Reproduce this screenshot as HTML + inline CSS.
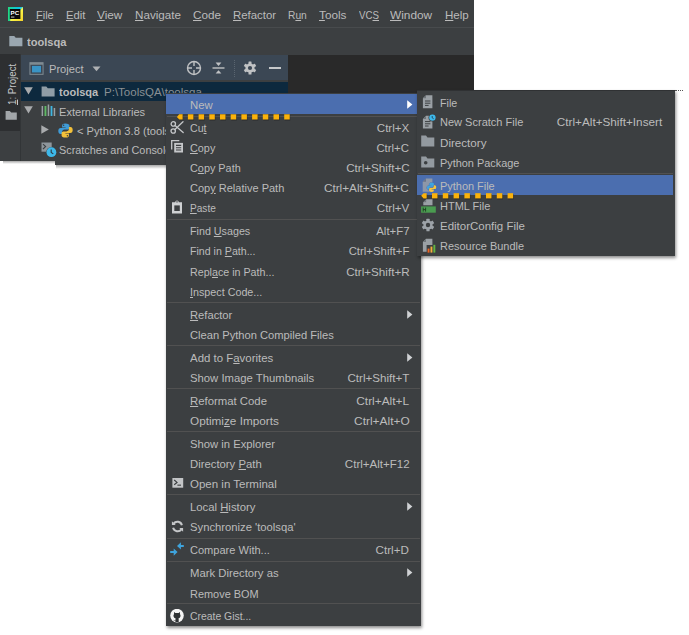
<!DOCTYPE html>
<html><head><meta charset="utf-8"><title>PyCharm - New Python File</title>
<style>
html,body{margin:0;padding:0;background:#fff;}
body{width:689px;height:635px;overflow:hidden;}
#root{position:relative;width:689px;height:635px;overflow:hidden;background:#fff;font-family:"Liberation Sans",sans-serif;font-size:11.5px;color:#bbbbbb;}
#root div, #root svg, #root span{position:absolute;}
.t{white-space:pre;line-height:14px;}
.t u{text-decoration:underline;text-decoration-thickness:1px;text-underline-offset:0.6px;}
.sep{height:1px;background:#515151;}
.hl{background:#4b6eaf;}

</style></head>
<body>
<div id="root">
<!-- IDE window fragment -->
<div style="left:0;top:0;width:473.5px;height:165px;background:#3c3f41;"></div>
<div style="left:0;top:27px;width:473.5px;height:1px;background:#484b4d;"></div>
<div style="left:0;top:54px;width:21px;height:77px;background:#2d2f31;"></div>
<div style="left:20px;top:54px;width:1px;height:111px;background:#323537;"></div>
<div style="left:21px;top:54.5px;width:267px;height:25.7px;background:#3b4754;"></div>
<div style="left:21px;top:82px;width:267px;height:19px;background:#0d293e;"></div>
<div style="left:288px;top:54.5px;width:185.5px;height:111px;background:#292929;"></div>
<div style="left:0;top:161.4px;width:54.5px;height:6px;background:#fff;"></div>
<div style="left:3px;top:161.4px;width:51.5px;height:3px;background:linear-gradient(#8a8a8a,#fff);opacity:.75"></div>
<div style="left:56px;top:165px;width:110px;height:3.5px;background:linear-gradient(#8a8a8a,#fff);opacity:.75"></div>

<span class="t" style="top:8.02px;left:36.40px;transform-origin:0 50%;transform:scaleX(0.9543);"><u>F</u>ile</span>
<span class="t" style="top:8.02px;left:66.00px;transform-origin:0 50%;transform:scaleX(0.9835);"><u>E</u>dit</span>
<span class="t" style="top:8.02px;left:97.30px;transform-origin:0 50%;transform:scaleX(1.0269);"><u>V</u>iew</span>
<span class="t" style="top:8.02px;left:135.00px;transform-origin:0 50%;transform:scaleX(1.0131);"><u>N</u>avigate</span>
<span class="t" style="top:8.02px;left:193.00px;transform-origin:0 50%;transform:scaleX(1.0182);"><u>C</u>ode</span>
<span class="t" style="top:8.02px;left:232.80px;transform-origin:0 50%;transform:scaleX(0.9889);"><u>R</u>efactor</span>
<span class="t" style="top:8.02px;left:288.00px;transform-origin:0 50%;transform:scaleX(0.8899);">R<u>u</u>n</span>
<span class="t" style="top:8.02px;left:318.90px;transform-origin:0 50%;transform:scaleX(1.0239);"><u>T</u>ools</span>
<span class="t" style="top:8.02px;left:358.50px;transform-origin:0 50%;transform:scaleX(0.8454);">VC<u>S</u></span>
<span class="t" style="top:8.02px;left:389.80px;transform-origin:0 50%;transform:scaleX(1.0312);"><u>W</u>indow</span>
<span class="t" style="top:8.02px;left:444.50px;transform-origin:0 50%;transform:scaleX(1.0054);"><u>H</u>elp</span>
<span class="t" style="top:35.02px;left:27.30px;transform-origin:0 50%;transform:scaleX(0.9660);font-weight:bold;">toolsqa</span>
<span class="t" style="top:62.02px;left:48.60px;transform-origin:0 50%;transform:scaleX(0.9666);">Project</span>
<span class="t" style="top:85.02px;left:58.70px;transform-origin:0 50%;transform:scaleX(0.9587);font-weight:bold;">toolsqa</span>
<span class="t" style="top:85.02px;left:103.70px;transform-origin:0 50%;transform:scaleX(1.0009);color:#8a9094;">P:\ToolsQA\toolsqa</span>
<span class="t" style="top:105.02px;left:58.70px;transform-origin:0 50%;transform:scaleX(0.9622);">External Libraries</span>
<span class="t" style="top:124.02px;left:77.40px;transform-origin:0 50%;transform:scaleX(0.9686);">&lt; Python 3.8 (toolsqa)</span>
<span class="t" style="top:143.02px;left:58.70px;transform-origin:0 50%;transform:scaleX(0.9450);">Scratches and Consoles</span>
<!-- PyCharm logo -->
<svg style="left:8px;top:7px" width="15" height="14" viewBox="0 0 15 14">
  <defs><linearGradient id="pcg" x1="0" y1="0" x2="1" y2="1"><stop offset="0" stop-color="#21d789"/><stop offset=".45" stop-color="#07c3f2"/><stop offset=".55" stop-color="#fcf84a"/><stop offset="1" stop-color="#f5d229"/></linearGradient></defs>
  <rect x="0" y="0" width="15" height="14" fill="url(#pcg)"/>
  <rect x="0" y="0" width="2.2" height="14" fill="#21d789"/>
  <rect x="1.8" y="2" width="10.6" height="10" fill="#0a0a0a"/>
  <text x="2.6" y="7.6" font-family="Liberation Sans, sans-serif" font-weight="bold" font-size="6.2" fill="#fff" textLength="8.6" lengthAdjust="spacingAndGlyphs">PC</text>
  <rect x="3" y="9.6" width="3.4" height=".9" fill="#ddd"/>
</svg>
<!-- nav folder -->
<svg style="left:9px;top:35px" width="14" height="12" viewBox="0 0 14 12"><path d="M0.3 1 H5.2 L6.7 2.8 H13.4 V11.2 H0.3 Z" fill="#9aa7b0"/></svg>
<!-- left stripe label -->
<span class="t" style="left:4.5px;top:105.4px;font-size:10.5px;transform-origin:0 0;transform:rotate(-90deg) scaleX(.93);color:#c4c6c8;"><u>1</u>: Project</span>
<svg style="left:5px;top:110px" width="13" height="11" viewBox="0 0 13 11"><path d="M0.6 1 H4.8 L6.2 2.6 H11.8 V9.8 H0.6 Z" fill="#a2a6a9"/></svg>
<!-- project header icon -->
<svg style="left:29.3px;top:62px" width="15" height="13.4" viewBox="0 0 16 14">
  <rect x="1" y="0.6" width="14" height="12.4" fill="none" stroke="#7f8b91" stroke-width="1.1"/>
  <rect x="1" y="0.6" width="14" height="2.2" fill="#7f8b91"/>
  <rect x="3.2" y="4" width="9.6" height="7" fill="#3a94c5"/>
</svg>
<svg style="left:92px;top:66px" width="9" height="6" viewBox="0 0 9 6"><path d="M0.5 0.5 H8.5 L4.5 5.2 Z" fill="#afb1b3"/></svg>
<!-- crosshair -->
<svg style="left:186px;top:60px" width="16" height="16" viewBox="0 0 16 16" fill="none" stroke="#c0c2c4" stroke-width="1.4">
  <circle cx="8" cy="8" r="6.5"/><path d="M8 1.5V6 M8 10V14.5 M1.5 8H6 M10 8H14.5"/>
</svg>
<!-- collapse -->
<svg style="left:212px;top:61px" width="13" height="14" viewBox="0 0 13 14"><rect x="0.5" y="6.3" width="12" height="1.4" fill="#c0c2c4"/><path d="M3.6 1.6H9.4L6.5 4.9Z M3.6 12.6H9.4L6.5 9.2Z" fill="#c0c2c4"/></svg>
<div style="left:234px;top:60px;width:0;height:17px;border-left:1px dotted #5a6570;"></div>
<!-- gear -->
<svg style="left:243px;top:61px" width="14" height="14" viewBox="-7 -7 14 14"><g fill="#c0c2c4">
  <rect x="-1.5" y="-6.4" width="3" height="12.8" rx=".5"/>
  <rect x="-1.5" y="-6.4" width="3" height="12.8" rx=".5" transform="rotate(60)"/><rect x="-1.5" y="-6.4" width="3" height="12.8" rx=".5" transform="rotate(120)"/>
  <circle r="4.6"/></g><circle r="2.1" fill="#3b4754"/></svg>
<div style="left:269px;top:67px;width:12px;height:2px;background:#c6c8ca;"></div>
<!-- tree arrows -->
<svg style="left:24px;top:87px" width="9" height="8" viewBox="0 0 9 8"><path d="M0.2 0.3H8.8L4.5 7.6Z" fill="#a9abad"/></svg>
<svg style="left:24px;top:106px" width="9" height="8" viewBox="0 0 9 8"><path d="M0.2 0.3H8.8L4.5 7.6Z" fill="#a9abad"/></svg>
<svg style="left:41px;top:125px" width="8" height="9" viewBox="0 0 8 9"><path d="M0.3 0.2V8.8L7.8 4.5Z" fill="#a9abad"/></svg>
<!-- tree folder -->
<svg style="left:41px;top:86px" width="14" height="11" viewBox="0 0 14 11"><path d="M0.6 0.4 H5.3 L6.8 2.2 H13.6 V10.4 H0.6 Z" fill="#909da6"/></svg>
<!-- libraries -->
<svg style="left:41px;top:104px" width="15" height="12" viewBox="0 0 15 12">
  <rect x="0.6" y="2" width="1.5" height="10" fill="#9aa0a4"/><rect x="3.5" y="2" width="1.9" height="10" fill="#5fb865"/>
  <rect x="6.7" y="0.5" width="1.5" height="11.5" fill="#9aa0a4"/><rect x="9.6" y="2" width="1.8" height="10" fill="#40b6e0"/>
  <rect x="12.7" y="4" width="1.5" height="8" fill="#9aa0a4"/></svg>
<!-- python -->
<svg style="left:58px;top:123px" width="15" height="15" viewBox="0 0 15 15">
  <path d="M7.3 0.4c-2.6 0-3.2 1-3.2 2.2V4.4H7.6V5H2.6C1.2 5 0.3 6 0.3 7.9s0.9 3 2.2 3H4.1V8.9c0-1.3 1.1-2.3 2.4-2.3H9.6c1 0 1.8-.8 1.8-1.8V2.6c0-1.2-1.1-2.2-4.1-2.2z" fill="#3f9bd6"/>
  <path d="M7.7 14.6c2.6 0 3.2-1 3.2-2.2V10.6H7.4V10H12.4c1.4 0 2.3-1 2.3-2.9s-.9-3-2.2-3H10.9V6.1c0 1.3-1.1 2.3-2.4 2.3H5.4c-1 0-1.8.8-1.8 1.8v2.2c0 1.2 1.1 2.2 4.1 2.2z" fill="#f3c13a"/>
  <circle cx="5.6" cy="2.3" r=".75" fill="#3c3f41"/><circle cx="9.4" cy="12.7" r=".75" fill="#3c3f41"/></svg>
<!-- scratches -->
<svg style="left:41px;top:142px" width="16" height="16" viewBox="0 0 16 16">
  <rect x="0.5" y="0.5" width="10.2" height="9.2" fill="#8e969c"/>
  <path d="M2 2.2L4.6 4.6L2 7" fill="none" stroke="#3c3f41" stroke-width="1.1"/>
  <circle cx="10.4" cy="10.2" r="5.2" fill="#3c3f41"/><circle cx="10.4" cy="10.2" r="4.9" fill="#3db8ea"/>
  <path d="M10.2 7.4V10.5L12.3 11.9" fill="none" stroke="#2b3a44" stroke-width="1.1"/></svg>

<!-- main context menu -->
<div style="left:166px;top:93px;width:254.5px;height:532.7px;background:#3c3f41;box-shadow:1px 2px 3px rgba(0,0,0,.45);"></div>
<div class="hl" style="left:166px;top:94px;width:251px;height:20px;"></div>
<div class="sep" style="left:167px;top:116px;width:253px;"></div>
<div class="sep" style="left:167px;top:219px;width:253px;"></div>
<div class="sep" style="left:167px;top:302px;width:253px;"></div>
<div class="sep" style="left:167px;top:345px;width:253px;"></div>
<div class="sep" style="left:167px;top:388px;width:253px;"></div>
<div class="sep" style="left:167px;top:431px;width:253px;"></div>
<div class="sep" style="left:167px;top:494px;width:253px;"></div>
<div class="sep" style="left:167px;top:538px;width:253px;"></div>
<div class="sep" style="left:167px;top:561px;width:253px;"></div>
<div class="sep" style="left:167px;top:603px;width:253px;"></div>
<!-- submenu -->
<div style="left:416.5px;top:89.5px;width:258px;height:166px;background:#3c3f41;border-top:1px solid #2f3133;box-sizing:border-box;box-shadow:1px 2px 3px rgba(0,0,0,.45);"></div>
<div style="left:675px;top:89.5px;width:8px;height:0;border-top:1px dotted #555;"></div>
<div class="sep" style="left:418px;top:173px;width:255px;"></div>
<div class="hl" style="left:417px;top:175px;width:256px;height:20px;"></div>

<span class="t" style="top:98.02px;left:189.60px;transform-origin:0 50%;transform:scaleX(0.9863);">New</span>
<span class="t" style="top:121.02px;left:189.60px;transform-origin:0 50%;transform:scaleX(0.9215);">Cu<u>t</u></span>
<span class="t" style="top:121.02px;right:279.80px;transform-origin:100% 50%;transform:scaleX(1.0068);">Ctrl+X</span>
<span class="t" style="top:141.02px;left:189.60px;transform-origin:0 50%;transform:scaleX(0.9419);"><u>C</u>opy</span>
<span class="t" style="top:141.02px;right:279.80px;transform-origin:100% 50%;transform:scaleX(0.9877);">Ctrl+C</span>
<span class="t" style="top:161.02px;left:189.60px;transform-origin:0 50%;transform:scaleX(0.9438);">C<u>o</u>py Path</span>
<span class="t" style="top:161.02px;right:279.80px;transform-origin:100% 50%;transform:scaleX(1.0137);">Ctrl+Shift+C</span>
<span class="t" style="top:181.02px;left:189.60px;transform-origin:0 50%;transform:scaleX(0.9577);">Cop<u>y</u> Relative Path</span>
<span class="t" style="top:181.02px;right:279.80px;transform-origin:100% 50%;transform:scaleX(1.0256);">Ctrl+Alt+Shift+C</span>
<span class="t" style="top:201.02px;left:189.60px;transform-origin:0 50%;transform:scaleX(0.8769);"><u>P</u>aste</span>
<span class="t" style="top:201.02px;right:279.80px;transform-origin:100% 50%;transform:scaleX(1.0068);">Ctrl+V</span>
<span class="t" style="top:224.02px;left:189.60px;transform-origin:0 50%;transform:scaleX(0.9322);">Find <u>U</u>sages</span>
<span class="t" style="top:224.02px;right:279.80px;transform-origin:100% 50%;transform:scaleX(0.9922);">Alt+F7</span>
<span class="t" style="top:244.02px;left:189.60px;transform-origin:0 50%;transform:scaleX(0.9229);">Find in <u>P</u>ath...</span>
<span class="t" style="top:244.02px;right:279.80px;transform-origin:100% 50%;transform:scaleX(0.9893);">Ctrl+Shift+F</span>
<span class="t" style="top:265.02px;left:189.60px;transform-origin:0 50%;transform:scaleX(0.9295);">Repl<u>a</u>ce in Path...</span>
<span class="t" style="top:265.02px;right:279.80px;transform-origin:100% 50%;transform:scaleX(1.0137);">Ctrl+Shift+R</span>
<span class="t" style="top:285.02px;left:189.60px;transform-origin:0 50%;transform:scaleX(0.9346);"><u>I</u>nspect Code...</span>
<span class="t" style="top:308.02px;left:189.60px;transform-origin:0 50%;transform:scaleX(0.9728);"><u>R</u>efactor</span>
<span class="t" style="top:328.02px;left:189.60px;transform-origin:0 50%;transform:scaleX(0.9697);">Clean Python Compiled Files</span>
<span class="t" style="top:351.02px;left:189.60px;transform-origin:0 50%;transform:scaleX(0.9946);">Add to F<u>a</u>vorites</span>
<span class="t" style="top:371.02px;left:189.60px;transform-origin:0 50%;transform:scaleX(0.9829);">Show Image Thumbnails</span>
<span class="t" style="top:371.02px;right:279.80px;transform-origin:100% 50%;transform:scaleX(1.0088);">Ctrl+Shift+T</span>
<span class="t" style="top:394.02px;left:189.60px;transform-origin:0 50%;transform:scaleX(0.9872);"><u>R</u>eformat Code</span>
<span class="t" style="top:394.02px;right:279.80px;transform-origin:100% 50%;transform:scaleX(1.0344);">Ctrl+Alt+L</span>
<span class="t" style="top:414.02px;left:189.60px;transform-origin:0 50%;transform:scaleX(1.0228);">Optimi<u>z</u>e Imports</span>
<span class="t" style="top:414.02px;right:279.80px;transform-origin:100% 50%;transform:scaleX(1.0356);">Ctrl+Alt+O</span>
<span class="t" style="top:437.02px;left:189.60px;transform-origin:0 50%;transform:scaleX(0.9789);">Show in Explorer</span>
<span class="t" style="top:457.02px;left:189.60px;transform-origin:0 50%;transform:scaleX(0.9839);">Directory <u>P</u>ath</span>
<span class="t" style="top:457.02px;right:279.80px;transform-origin:100% 50%;transform:scaleX(1.0021);">Ctrl+Alt+F12</span>
<span class="t" style="top:477.02px;left:189.60px;transform-origin:0 50%;transform:scaleX(1.0008);">Open in Terminal</span>
<span class="t" style="top:500.02px;left:189.60px;transform-origin:0 50%;transform:scaleX(0.9837);">Local <u>H</u>istory</span>
<span class="t" style="top:520.02px;left:189.60px;transform-origin:0 50%;transform:scaleX(0.9782);">Synchronize 'toolsqa'</span>
<span class="t" style="top:543.02px;left:189.60px;transform-origin:0 50%;transform:scaleX(0.9605);">Compare With...</span>
<span class="t" style="top:543.02px;right:279.80px;transform-origin:100% 50%;transform:scaleX(1.0120);">Ctrl+D</span>
<span class="t" style="top:566.02px;left:189.60px;transform-origin:0 50%;transform:scaleX(0.9832);">Mark Directory as</span>
<span class="t" style="top:587.02px;left:189.60px;transform-origin:0 50%;transform:scaleX(0.9513);">Remove BOM</span>
<span class="t" style="top:609.02px;left:189.60px;transform-origin:0 50%;transform:scaleX(0.9033);">Create Gist...</span>
<span class="t" style="top:96.02px;left:440.20px;transform-origin:0 50%;transform:scaleX(0.9282);">File</span>
<span class="t" style="top:115.02px;left:440.20px;transform-origin:0 50%;transform:scaleX(0.9583);">New Scratch File</span>
<span class="t" style="top:136.02px;left:440.20px;transform-origin:0 50%;transform:scaleX(1.0105);">Directory</span>
<span class="t" style="top:156.02px;left:440.20px;transform-origin:0 50%;transform:scaleX(0.9479);">Python Package</span>
<span class="t" style="top:179.02px;left:440.20px;transform-origin:0 50%;transform:scaleX(0.9508);">Python File</span>
<span class="t" style="top:199.02px;left:440.20px;transform-origin:0 50%;transform:scaleX(0.9561);">HTML File</span>
<span class="t" style="top:219.02px;left:440.20px;transform-origin:0 50%;transform:scaleX(0.9986);">EditorConfig File</span>
<span class="t" style="top:239.02px;left:440.20px;transform-origin:0 50%;transform:scaleX(0.9520);">Resource Bundle</span>
<span class="t" style="top:115.02px;right:26.90px;transform-origin:100% 50%;transform:scaleX(1.0210);">Ctrl+Alt+Shift+Insert</span>
<!-- orange dashed annotations -->
<svg style="left:175px;top:112px" width="120" height="12" viewBox="0 0 120 12">
  <g fill="#1c1c1c" opacity=".5" transform="translate(0.5,1)"><path d="M1.9 4.9L4.2 2.3H7.6V7.5H4.2Z"/>
  <rect x="12.9" y="2.3" width="5.5" height="5.2"/><rect x="23.6" y="2.3" width="5.5" height="5.2"/><rect x="34.3" y="2.3" width="5.5" height="5.2"/><rect x="45" y="2.3" width="5.5" height="5.2"/><rect x="55.7" y="2.3" width="5.5" height="5.2"/><rect x="66.4" y="2.3" width="5.5" height="5.2"/><rect x="77.1" y="2.3" width="5.5" height="5.2"/><rect x="87.8" y="2.3" width="5.5" height="5.2"/><rect x="98.5" y="2.3" width="5.5" height="5.2"/><rect x="109.2" y="2.3" width="5.5" height="5.2"/></g>
  <g fill="#fbb20b"><path d="M1.9 4.9L4.2 2.3H7.6V7.5H4.2Z"/>
  <rect x="12.9" y="2.3" width="5.5" height="5.2"/><rect x="23.6" y="2.3" width="5.5" height="5.2"/><rect x="34.3" y="2.3" width="5.5" height="5.2"/><rect x="45" y="2.3" width="5.5" height="5.2"/><rect x="55.7" y="2.3" width="5.5" height="5.2"/><rect x="66.4" y="2.3" width="5.5" height="5.2"/><rect x="77.1" y="2.3" width="5.5" height="5.2"/><rect x="87.8" y="2.3" width="5.5" height="5.2"/><rect x="98.5" y="2.3" width="5.5" height="5.2"/><rect x="109.2" y="2.3" width="5.5" height="5.2"/></g>
</svg>
<svg style="left:419px;top:191px" width="100" height="12" viewBox="0 0 100 12">
  <g fill="#1c1c1c" opacity=".5" transform="translate(0.5,1)"><path d="M2.2 4.8L4.5 2.2H7.7V7.4H4.5Z"/>
  <rect x="13" y="2.2" width="5.5" height="5.2"/><rect x="23.8" y="2.2" width="5.5" height="5.2"/><rect x="34.6" y="2.2" width="5.5" height="5.2"/><rect x="45.4" y="2.2" width="5.5" height="5.2"/><rect x="56.2" y="2.2" width="5.5" height="5.2"/><rect x="67" y="2.2" width="5.5" height="5.2"/><rect x="77.8" y="2.2" width="5.5" height="5.2"/><rect x="88.6" y="2.2" width="5.5" height="5.2"/></g>
  <g fill="#fbb20b"><path d="M2.2 4.8L4.5 2.2H7.7V7.4H4.5Z"/>
  <rect x="13" y="2.2" width="5.5" height="5.2"/><rect x="23.8" y="2.2" width="5.5" height="5.2"/><rect x="34.6" y="2.2" width="5.5" height="5.2"/><rect x="45.4" y="2.2" width="5.5" height="5.2"/><rect x="56.2" y="2.2" width="5.5" height="5.2"/><rect x="67" y="2.2" width="5.5" height="5.2"/><rect x="77.8" y="2.2" width="5.5" height="5.2"/><rect x="88.6" y="2.2" width="5.5" height="5.2"/></g>
</svg>
<!-- submenu arrows -->
<svg style="left:407px;top:100px" width="6" height="9" viewBox="0 0 6 9"><path d="M0.2 0.3V8.7L5.4 4.5Z" fill="#ffffff"/></svg>
<svg style="left:407px;top:310px" width="6" height="9" viewBox="0 0 6 9"><path d="M0.2 0.3V8.7L5.4 4.5Z" fill="#d0d2d4"/></svg>
<svg style="left:407px;top:353px" width="6" height="9" viewBox="0 0 6 9"><path d="M0.2 0.3V8.7L5.4 4.5Z" fill="#d0d2d4"/></svg>
<svg style="left:407px;top:502px" width="6" height="9" viewBox="0 0 6 9"><path d="M0.2 0.3V8.7L5.4 4.5Z" fill="#d0d2d4"/></svg>
<svg style="left:407px;top:568px" width="6" height="9" viewBox="0 0 6 9"><path d="M0.2 0.3V8.7L5.4 4.5Z" fill="#d0d2d4"/></svg>
<!-- scissors -->
<svg style="left:170px;top:120px" width="15" height="15" viewBox="0 0 15 15" fill="none" stroke="#c5c7c9" stroke-width="1.3">
  <circle cx="3.3" cy="3.9" r="2.2"/><circle cx="3.2" cy="11" r="2.2"/>
  <path d="M5 5.4L13.2 12.6 M4.9 9.5L13 1.8" stroke-linecap="round"/></svg>
<!-- copy -->
<svg style="left:171px;top:140px" width="13" height="13" viewBox="0 0 13 13">
  <path d="M0.7 9.6V0.7H8.3" fill="none" stroke="#c5c7c9" stroke-width="1.3"/>
  <rect x="3.2" y="2.9" width="8.8" height="9.6" fill="#c5c7c9"/>
  <path d="M5 5.4H10.2 M5 7.7H10.2 M5 10H10.2" stroke="#3c3f41" stroke-width="1.1"/></svg>
<!-- paste -->
<svg style="left:171px;top:200px" width="12" height="14" viewBox="0 0 12 14">
  <path d="M1 2.2H4.2a1.8 1.8 0 0 1 3.6 0H11V13.4H1Z" fill="#cfd1d3"/>
  <rect x="3.3" y="5.4" width="5.5" height="5.6" fill="#3c3f41"/><rect x="5.2" y="1.4" width="1.6" height="1" fill="#3c3f41"/></svg>
<!-- terminal -->
<svg style="left:172px;top:478px" width="12" height="10" viewBox="0 0 12 10">
  <rect x="0.4" y="0" width="10.8" height="9.7" fill="#c3c5c7"/>
  <path d="M2.2 2L5 4.4L2.2 6.8" fill="none" stroke="#3c3f41" stroke-width="1.2"/><rect x="5.4" y="6.6" width="3.6" height="1.1" fill="#3c3f41"/></svg>
<!-- sync -->
<svg style="left:171px;top:520px" width="13" height="13" viewBox="0 0 13 13" fill="none" stroke="#c5c7c9" stroke-width="2">
  <path d="M10.9 5.2A4.7 4.7 0 0 0 2.6 3.6"/><path d="M2.1 7.8A4.7 4.7 0 0 0 10.4 9.4"/>
  <path d="M0.9 1.2V5H4.7Z M12.1 11.8V8H8.3Z" fill="#c5c7c9" stroke="none"/></svg>
<!-- compare -->
<svg style="left:170px;top:542px" width="14" height="14" viewBox="0 0 14 14" fill="#3ea3dc">
  <path d="M7 3.9L10.9 0.3V2.9H13.8V4.9H10.9V7.5Z"/><path d="M7.6 10.1L3.7 6.5V9.1H0.2V11.1H3.7V13.7Z"/></svg>
<!-- github -->
<svg style="left:170px;top:609px" width="14" height="14" viewBox="0 0 14 14">
  <circle cx="7" cy="6.6" r="6.8" fill="#f4f4f4"/>
  <path d="M4.2 3.1L5.3 4.1Q7 3.7 8.7 4.1L9.8 3.1Q10.2 4.2 9.9 5Q10.7 6 10.5 7.2Q10.1 9.2 8.4 9.5Q8.8 10 8.7 10.8V13H5.4V11.6Q3.9 12 3.3 10.7Q3.9 10.6 4.4 11.2Q4.8 11.5 5.4 11.2Q5.4 10 5.7 9.5Q3.9 9.2 3.5 7.2Q3.3 6 4.1 5Q3.8 4.2 4.2 3.1Z" fill="#2f3234"/></svg>
<!-- submenu icons -->
<svg style="left:422px;top:95px" width="11" height="14" viewBox="0 0 11 14"><path d="M4 0.2H10.4V13.2H0.9V3.3Z" fill="#9aa0a5"/><path d="M0.9 3.3H4V0.2Z" fill="#6f757a"/><path d="M3 6H8.4 M3 8.2H8.4 M3 10.4H6.6" stroke="#3c3f41" stroke-width="1"/></svg>
<svg style="left:422px;top:114px" width="15" height="15" viewBox="0 0 15 15"><path d="M4 1.8H10.4V14.6H0.9V4.9Z" fill="#9aa0a5"/><path d="M0.9 4.9H4V1.8Z" fill="#6f757a"/><path d="M3 7.6H8.4 M3 9.8H8.4 M3 12H6.6" stroke="#3c3f41" stroke-width="1"/>
  <circle cx="10.4" cy="3.6" r="3.9" fill="#3c3f41"/><circle cx="10.4" cy="3.6" r="3.2" fill="#3db8ea"/><path d="M10.2 2V3.8L11.6 4.7" fill="none" stroke="#274050" stroke-width=".9"/></svg>
<svg style="left:421px;top:135px" width="14" height="12" viewBox="0 0 14 12"><path d="M0.2 0.6H5L6.5 2.5H13.3V11.6H0.2Z" fill="#939aa0"/></svg>
<svg style="left:421px;top:156px" width="14" height="12" viewBox="0 0 14 12"><path d="M0.2 0.6H5L6.5 2.5H13.3V11.4H0.2Z" fill="#939aa0"/><circle cx="4.7" cy="6.8" r="1.8" fill="#3c3f41"/></svg>
<!-- python file -->
<svg style="left:422px;top:178px" width="15" height="16" viewBox="0 0 15 16"><path d="M4 0.6H10.4V13.8H0.7V3.8Z" fill="#8d97a8"/><path d="M0.7 3.8H4V0.6Z" fill="#6a7488"/>
  <g transform="translate(4.8,4.6) scale(.64)">
  <path d="M7.3 0.4c-2.6 0-3.2 1-3.2 2.2V4.4H7.6V5H2.6C1.2 5 0.3 6 0.3 7.9s0.9 3 2.2 3H4.1V8.9c0-1.3 1.1-2.3 2.4-2.3H9.6c1 0 1.8-.8 1.8-1.8V2.6c0-1.2-1.1-2.2-4.1-2.2z" fill="#3fa4e0" stroke="#4b6eaf" stroke-width="1.4" paint-order="stroke"/>
  <path d="M7.7 14.6c2.6 0 3.2-1 3.2-2.2V10.6H7.4V10H12.4c1.4 0 2.3-1 2.3-2.9s-.9-3-2.2-3H10.9V6.1c0 1.3-1.1 2.3-2.4 2.3H5.4c-1 0-1.8.8-1.8 1.8v2.2c0 1.2 1.1 2.2 4.1 2.2z" fill="#f6c53c" stroke="#4b6eaf" stroke-width="1.4" paint-order="stroke"/></g></svg>
<!-- html file -->
<svg style="left:421px;top:199px" width="15" height="14" viewBox="0 0 15 14"><path d="M5.2 0.2H11.5V6.2H2.3V3.2Z" fill="#9aa0a5"/><path d="M2.3 3.2H5.2V0.2Z" fill="#6f757a"/>
  <rect x="0.1" y="7.4" width="14.7" height="6.3" fill="#4a9c50"/><path d="M2.2 8.6V12.6 M4.6 8.6V12.6 M2.2 10.6H4.6" stroke="#1d3a20" stroke-width=".9"/></svg>
<!-- editorconfig gear -->
<svg style="left:421px;top:218px" width="14" height="14" viewBox="-7 -7 14 14"><g fill="#9da3a8">
  <rect x="-1.6" y="-6.3" width="3.2" height="12.6" rx=".5"/>
  <rect x="-1.6" y="-6.3" width="3.2" height="12.6" rx=".5" transform="rotate(60)"/><rect x="-1.6" y="-6.3" width="3.2" height="12.6" rx=".5" transform="rotate(120)"/>
  <circle r="4.6"/></g><circle r="2.2" fill="#3c3f41"/></svg>
<!-- resource bundle -->
<svg style="left:422px;top:238px" width="15" height="15" viewBox="0 0 15 15"><path d="M4 0.8H10.4V13.8H0.9V3.9Z" fill="#9aa0a5"/><path d="M0.9 3.9H4V0.8Z" fill="#6f757a"/>
  <rect x="4.6" y="7" width="9.6" height="7.6" fill="#3c3f41"/>
  <rect x="5.6" y="10.6" width="1.9" height="4" fill="#f26522"/><rect x="8.5" y="8.6" width="1.9" height="6" fill="#f4af3d"/><rect x="11.4" y="6.8" width="1.9" height="7.8" fill="#62b543"/></svg>

</div>
</body></html>
